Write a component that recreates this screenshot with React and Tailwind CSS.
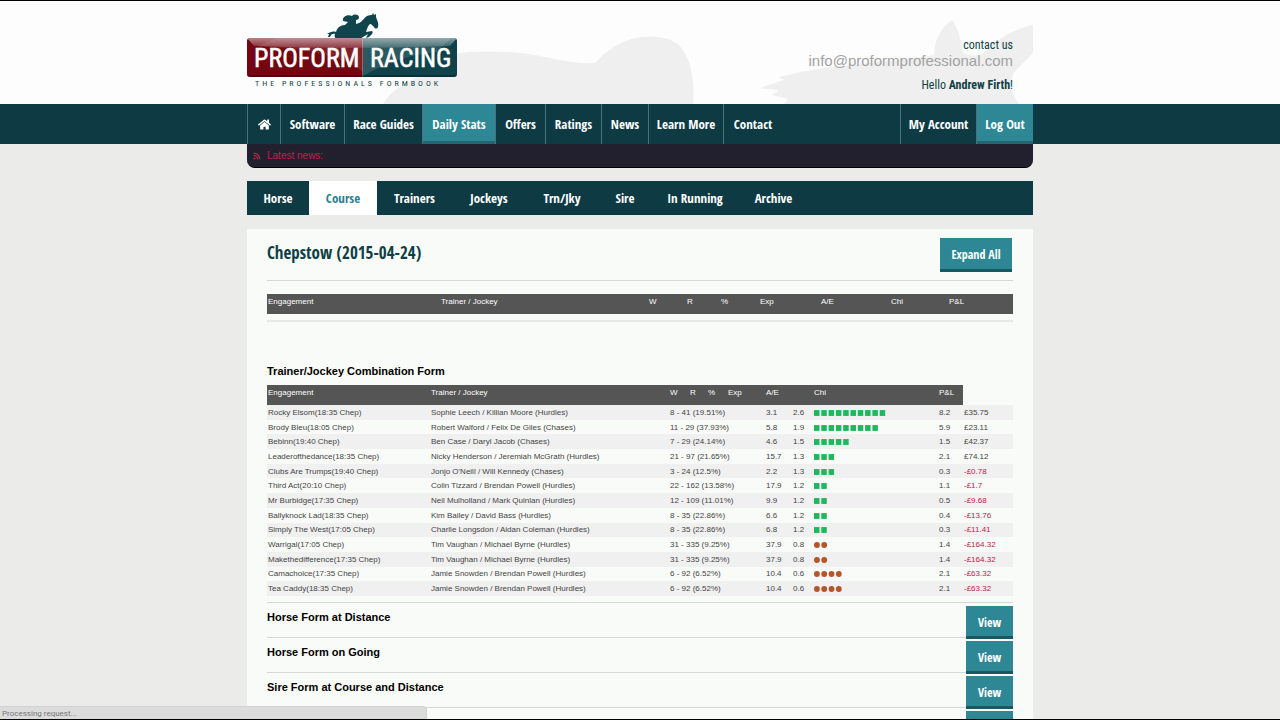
import React from 'react';
import { FaHome, FaRss } from 'react-icons/fa';

const MAIN_NAV = [
    { label: 'Software', width: 'w-[64px]' },
    { label: 'Race Guides', width: 'w-[78px]' },
    { label: 'Daily Stats', width: 'w-[73px]', active: true },
    { label: 'Offers', width: 'w-[50px]' },
    { label: 'Ratings', width: 'w-[56px]' },
    { label: 'News', width: 'w-[47px]' },
    { label: 'Learn More', width: 'w-[75px]' },
    { label: 'Contact', width: 'w-[58px]' },
];

const SUB_NAV = [
    { label: 'Horse', width: 'w-[62px]' },
    { label: 'Course', width: 'w-[68px]', active: true },
    { label: 'Trainers', width: 'w-[75px]' },
    { label: 'Jockeys', width: 'w-[74px]' },
    { label: 'Trn/Jky', width: 'w-[72px]' },
    { label: 'Sire', width: 'w-[54px]' },
    { label: 'In Running', width: 'w-[86px]' },
    { label: 'Archive', width: 'w-[71px]' },
];

const ROWS = [
    ['Rocky Elsom(18:35 Chep)', 'Sophie Leech / Killian Moore (Hurdles)', '8 - 41 (19.51%)', '3.1', '2.6', 10, '8.2', '£35.75'],
    ['Brody Bleu(18:05 Chep)', 'Robert Walford / Felix De Giles (Chases)', '11 - 29 (37.93%)', '5.8', '1.9', 9, '5.9', '£23.11'],
    ['Bebinn(19:40 Chep)', 'Ben Case / Daryl Jacob (Chases)', '7 - 29 (24.14%)', '4.6', '1.5', 5, '1.5', '£42.37'],
    ['Leaderofthedance(18:35 Chep)', 'Nicky Henderson / Jeremiah McGrath (Hurdles)', '21 - 97 (21.65%)', '15.7', '1.3', 3, '2.1', '£74.12'],
    ['Clubs Are Trumps(19:40 Chep)', "Jonjo O'Neill / Will Kennedy (Chases)", '3 - 24 (12.5%)', '2.2', '1.3', 3, '0.3', '-£0.78'],
    ['Third Act(20:10 Chep)', 'Colin Tizzard / Brendan Powell (Hurdles)', '22 - 162 (13.58%)', '17.9', '1.2', 2, '1.1', '-£1.7'],
    ['Mr Burbidge(17:35 Chep)', 'Neil Mulholland / Mark Quinlan (Hurdles)', '12 - 109 (11.01%)', '9.9', '1.2', 2, '0.5', '-£9.68'],
    ['Ballyknock Lad(18:35 Chep)', 'Kim Bailey / David Bass (Hurdles)', '8 - 35 (22.86%)', '6.6', '1.2', 2, '0.4', '-£13.76'],
    ['Simply The West(17:05 Chep)', 'Charlie Longsdon / Aidan Coleman (Hurdles)', '8 - 35 (22.86%)', '6.8', '1.2', 2, '0.3', '-£11.41'],
    ['Warrigal(17:05 Chep)', 'Tim Vaughan / Michael Byrne (Hurdles)', '31 - 335 (9.25%)', '37.9', '0.8', -2, '1.4', '-£164.32'],
    ['Makethedifference(17:35 Chep)', 'Tim Vaughan / Michael Byrne (Hurdles)', '31 - 335 (9.25%)', '37.9', '0.8', -2, '1.4', '-£164.32'],
    ['Camachoice(17:35 Chep)', 'Jamie Snowden / Brendan Powell (Hurdles)', '6 - 92 (6.52%)', '10.4', '0.6', -4, '2.1', '-£63.32'],
    ['Tea Caddy(18:35 Chep)', 'Jamie Snowden / Brendan Powell (Hurdles)', '6 - 92 (6.52%)', '10.4', '0.6', -4, '2.1', '-£63.32'],
];

const SECTIONS = [
    'Horse Form at Distance',
    'Horse Form on Going',
    'Sire Form at Course and Distance',
];

const CONDENSED = "font-['Open_Sans_Condensed','Roboto_Condensed',sans-serif] font-bold";
const CONTAINER = 'w-full max-w-[786px] mx-auto';
const BUTTON = 'shrink-0 bg-[#2d8795] border-b-3 border-[#175863] text-white text-[12px] leading-4 pt-[3px]';

function Logo() {
    return (
        <svg viewBox="0 0 210 66" className="w-[210px] h-[66px]" role="img" aria-label="Proform Racing">
            <defs>
                <linearGradient id="gloss" x1="0" y1="0" x2="0" y2="1">
                    <stop offset="0" stopColor="#fff" stopOpacity="0.5" />
                    <stop offset="1" stopColor="#fff" stopOpacity="0.12" />
                </linearGradient>
                <clipPath id="plate">
                    <rect x="0" y="26" width="210" height="39" rx="3" />
                </clipPath>
            </defs>
            {/* Horse and jockey */}
            <path
                fill="#11454d"
                d="M80 22 C83 20 86 19 89 20 C90 16 93 13 98 13 L101 10 L96 9 C95 5 100 2 105 4 C107 2 111 2 112 5 C112 7 111 8 109 8 L109 12 L112 11 C115 10 117 6 120 4 C122 3 124 3 125 3 L126 1 L127 3 L129 2 L129 5 C130 8 132 11 131 15 C130 17 128 17 127 15 L124 12 C122 12 121 14 120 17 L119 20 L125 19 C127 21 124 23 122 25 L119 26 L121 22 L116 25 L113 27 H92 C88 27 87 25 88 22 C86 21 84 22 83 25 L81 25 L82 22 Z"
            />
            <g clipPath="url(#plate)">
                <rect x="0" y="26" width="116" height="39" fill="#730611" />
                <rect x="116" y="26" width="94" height="39" fill="#0f424b" />
                <path d="M0 26 H210 L203 34 Q105 38 7 34 Z" fill="url(#gloss)" />
                <path d="M116 26 H204 L190 40 Q150 44 116 64 Z" fill="#fff" opacity="0.12" />
                <path d="M30 26 H116 V60 Q90 38 10 34 Z" fill="#fff" opacity="0.1" />
                <rect x="115" y="26" width="1" height="39" fill="#fff" opacity="0.3" />
                <rect x="0" y="63" width="210" height="2" fill="#000" opacity="0.25" />
            </g>
            <g fill="#fff" stroke="#fff" strokeWidth="0.5" fontFamily="'Roboto Condensed', 'Open Sans Condensed', sans-serif" fontSize="26">
                <text x="7" y="55">PROFORM</text>
                <text x="123" y="55">RACING</text>
            </g>
        </svg>
    );
}

function HeaderSilhouette() {
    return (
        <svg viewBox="247 1 786 103" className="absolute inset-0 w-full h-full" aria-hidden="true">
            <path
                fill="#efefef"
                d="M383 104 C390 92 402 84 420 76 C428 66 438 57 452 54 C475 50 510 51 535 55 C555 59 575 64 595 63 C605 52 618 41 640 37 C655 35 670 38 678 44 C684 50 688 58 690 66 C694 80 694 92 693 104 Z"
            />
            <path
                fill="#efefef"
                d="M784 104 L788 99 L772 95 L779 90 L760 88 L784 80 L779 77 C800 72 825 67 850 65 C880 62 905 60 934 55 C934 42 940 28 952 20 C957 26 961 38 963 53 C970 56 976 56 983 54 C992 43 1010 30 1033 25 V52 C1028 60 1019 66 1013 74 C1011 82 1010 92 1019 104 Z"
            />
        </svg>
    );
}

function NavLink({ item }) {
    return (
        <a
            href="#"
            className={`${item.width} flex items-center justify-center border-r border-[#48737a] last-of-type:border-r-0 whitespace-nowrap pt-px ${
                item.active ? 'bg-[#2d8795] shadow-[inset_0_-3px_0_#246672]' : ''
            }`}
        >
            {item.label}
        </a>
    );
}

// Green squares for a positive score, brown dots for a negative one
function Rating({ score }) {
    const marks = Array.from({ length: Math.abs(score) });
    return (
        <svg viewBox="0 0 100 8" className="w-[73px] h-[6px] block" aria-hidden="true">
            {marks.map((_, i) =>
                score > 0 ? (
                    <rect key={i} x={i * 10} y="0" width="7.5" height="8" fill="#1fb65c" />
                ) : (
                    <circle key={i} cx={i * 10 + 4} cy="4" r="4" fill="#b4552a" />
                )
            )}
        </svg>
    );
}

export default function App() {
    return (
        <div className="relative h-screen flex flex-col overflow-hidden border-y border-black bg-[#ebebea] font-['Liberation_Sans',Arial,sans-serif] text-[#0f3f46]">
            {/* Header */}
            <header className="shrink-0 bg-[#fdfdfd]">
                <div className={`${CONTAINER} relative h-[103px] flex justify-between`}>
                    <HeaderSilhouette />
                    <a href="#" className="relative mt-[11px] self-start flex flex-col">
                        <Logo />
                        <span className="mt-px pl-2 text-[8px] leading-[10px] tracking-[3px] whitespace-nowrap font-['Roboto_Condensed',sans-serif]">
                            THE PROFESSIONALS FORMBOOK
                        </span>
                    </a>
                    <div className="relative pr-5 pt-9 flex flex-col items-end font-['Roboto_Condensed',sans-serif] text-[12px] leading-4">
                        <a href="#">contact us</a>
                        <a href="#" className="font-['Liberation_Sans',sans-serif] text-[15px] text-[#a2a2a2]">
                            info@proformprofessional.com
                        </a>
                        <p className="mt-2">
                            Hello <strong>Andrew Firth</strong>!
                        </p>
                    </div>
                </div>
            </header>

            {/* Main navigation */}
            <nav className={`shrink-0 bg-[#0d3a43] text-white text-[13px] ${CONDENSED}`}>
                <div className={`${CONTAINER} h-10 flex border-l border-[#48737a]`}>
                    <a href="#" aria-label="Home" className="w-[33px] flex items-center justify-center border-r border-[#48737a]">
                        <FaHome size={13} />
                    </a>
                    {MAIN_NAV.map((item) => (
                        <NavLink key={item.label} item={item} />
                    ))}
                    <div className="ml-auto flex">
                        <a href="#" className="w-[77px] pt-px flex items-center justify-center border-x border-[#48737a]">
                            My Account
                        </a>
                        <a href="#" className="w-[56px] pt-px flex items-center justify-center bg-[#2d8795] shadow-[inset_0_-3px_0_#246672]">
                            Log Out
                        </a>
                    </div>
                </div>
            </nav>

            <div className={`${CONTAINER} shrink-0 h-6 px-[6px] flex items-center gap-[6px] rounded-b-lg bg-[#221f2f] border-b border-black text-[10px] text-[#c02148]`}>
                <FaRss size={8} />
                Latest news:
            </div>

            {/* Section tabs */}
            <nav className={`${CONTAINER} shrink-0 mt-[13px] h-[34px] flex bg-[#0d3a43] text-white text-[13px] ${CONDENSED}`}>
                {SUB_NAV.map((item) => (
                    <a
                        key={item.label}
                        href="#"
                        className={`${item.width} pt-px flex items-center justify-center ${item.active ? 'bg-white text-[#2d7f90]' : ''}`}
                    >
                        {item.label}
                    </a>
                ))}
            </nav>

            <main className={`${CONTAINER} flex-1 min-h-0 overflow-hidden mt-[14px] px-5 bg-[#f9fbf8]`}>
                <div className="h-[52px] pt-[9px] flex justify-between items-start border-b border-[#d3d8d5]">
                    <h1 className={`text-[17px] leading-[30px] ${CONDENSED}`}>Chepstow (2015-04-24)</h1>
                    <button className={`w-[72px] h-[34px] mr-px ${BUTTON} ${CONDENSED}`}>Expand All</button>
                </div>

                <table className="mt-[13px] w-full table-fixed bg-[#555] text-left text-[8px] leading-[14px] text-white">
                    <thead>
                        <tr className="h-5 align-top *:font-normal *:pl-px *:pt-px">
                            <th className="w-[173px]">Engagement</th>
                            <th className="w-[208px]">Trainer / Jockey</th>
                            <th className="w-[38px]">W</th>
                            <th className="w-[34px]">R</th>
                            <th className="w-[39px]">%</th>
                            <th className="w-[61px]">Exp</th>
                            <th className="w-[70px]">A/E</th>
                            <th className="w-[58px]">Chi</th>
                            <th>P&amp;L</th>
                        </tr>
                    </thead>
                </table>

                <hr className="mt-[6px] border-t-2 border-[#e5e8e5]" />

                <h2 className="mt-[41px] text-[11px] leading-4 font-bold text-black">Trainer/Jockey Combination Form</h2>
                <table className="mt-[6px] w-full h-[211px] table-fixed text-left text-[8px] leading-[12px] text-[#444]">
                    <colgroup>
                        <col className="w-[163px]" />
                        <col className="w-[239px]" />
                        <col className="w-[20px]" />
                        <col className="w-[18px]" />
                        <col className="w-[20px]" />
                        <col className="w-[38px]" />
                        <col className="w-[27px]" />
                        <col className="w-[21px]" />
                        <col className="w-[125px]" />
                        <col className="w-[25px]" />
                        <col />
                    </colgroup>
                    <thead>
                        <tr className="h-5 align-top text-white *:bg-[#555] *:font-normal *:pl-px *:pt-[2px]">
                            <th>Engagement</th>
                            <th>Trainer / Jockey</th>
                            <th>W</th>
                            <th>R</th>
                            <th>%</th>
                            <th>Exp</th>
                            <th colSpan={2}>A/E</th>
                            <th>Chi</th>
                            <th>P&amp;L</th>
                        </tr>
                    </thead>
                    <tbody>
                        {ROWS.map(([horse, pair, record, exp, ae, score, chi, pl]) => (
                            <tr key={horse} className="odd:bg-[#f0f0f0] *:pl-px *:pt-px whitespace-nowrap">
                                <td>{horse}</td>
                                <td>{pair}</td>
                                <td colSpan={4}>{record}</td>
                                <td>{exp}</td>
                                <td>{ae}</td>
                                <td><Rating score={score} /></td>
                                <td>{chi}</td>
                                <td className={pl.startsWith('-') ? 'text-[#c01848]' : ''}>{pl}</td>
                            </tr>
                        ))}
                    </tbody>
                </table>

                <div className="mt-[6px]">
                    {SECTIONS.map((title) => (
                        <section key={title} className="h-[35px] flex justify-between items-start border-t border-[#d3d8d5]">
                            <h2 className="mt-[6px] text-[11px] leading-4 font-bold text-black">{title}</h2>
                            <button className={`mt-[3px] w-[47px] h-[33px] ${BUTTON} ${CONDENSED}`}>View</button>
                        </section>
                    ))}
                    <section className="h-[35px] flex justify-end items-start border-t border-[#d3d8d5]">
                        <button aria-label="View" className={`mt-[3px] w-[47px] h-[33px] ${BUTTON}`} />
                    </section>
                </div>
            </main>

            {/* Browser status bar */}
            <div className="absolute bottom-0 left-0 w-1/3 h-[13px] pl-[2px] rounded-tr-sm border-t border-r border-[#d2d2d2] bg-[#dcdcdc] text-[8px] leading-[13px] text-[#777] font-['Roboto',sans-serif]">
                Processing request...
            </div>
        </div>
    );
}
